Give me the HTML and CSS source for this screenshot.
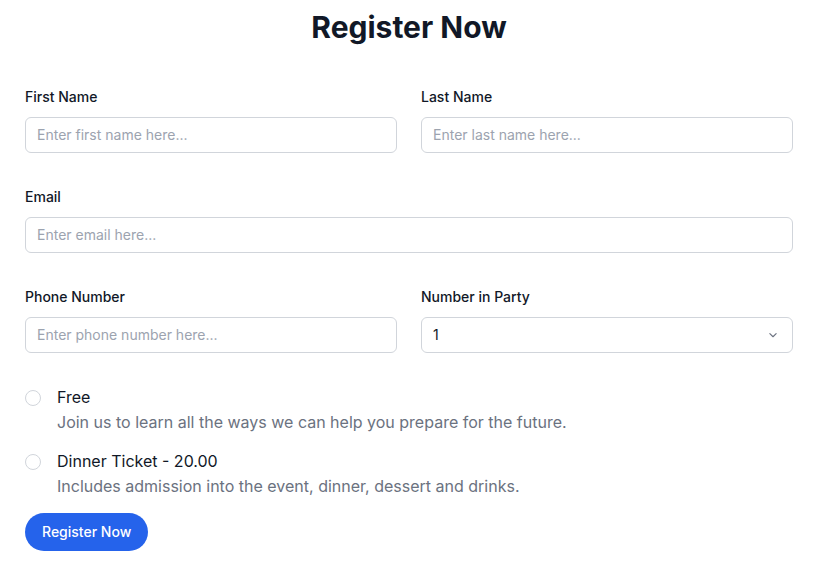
FILE: index.html
```html
<!DOCTYPE html>
<html>
<head>
<meta charset="utf-8">
<link rel="stylesheet" href="styles.css">
</head>
<body>
<main class="page">
  <h1 class="title">Register Now</h1>
  <form class="form">
    <div class="row two">
      <div class="field">
        <label class="label">First Name</label>
        <input class="input" type="text" placeholder="Enter first name here...">
      </div>
      <div class="field">
        <label class="label">Last Name</label>
        <input class="input" type="text" placeholder="Enter last name here...">
      </div>
    </div>
    <div class="row">
      <div class="field">
        <label class="label">Email</label>
        <input class="input" type="text" placeholder="Enter email here...">
      </div>
    </div>
    <div class="row two">
      <div class="field">
        <label class="label">Phone Number</label>
        <input class="input" type="text" placeholder="Enter phone number here...">
      </div>
      <div class="field">
        <label class="label">Number in Party</label>
        <div class="select">
          <span>1</span>
          <svg class="chev" width="14" height="14" viewBox="0 0 20 20" fill="none" stroke="#6b7280" stroke-width="1.6" stroke-linecap="round" stroke-linejoin="round"><path d="M5.5 8l4.5 4.5 4.5-4.5"/></svg>
        </div>
      </div>
    </div>
    <div class="options">
      <div class="option">
        <span class="radio"></span>
        <div class="opt-text">
          <div class="opt-title">Free</div>
          <div class="opt-desc">Join us to learn all the ways we can help you prepare for the future.</div>
        </div>
      </div>
      <div class="option">
        <span class="radio"></span>
        <div class="opt-text">
          <div class="opt-title">Dinner Ticket - 20.00</div>
          <div class="opt-desc">Includes admission into the event, dinner, dessert and drinks.</div>
        </div>
      </div>
    </div>
    <button class="btn" type="button">Register Now</button>
  </form>
</main>
</body>
</html>
```
FILE: styles.css
```css
* { box-sizing: border-box; }
html, body { margin: 0; padding: 0; background: #ffffff; }
body {
  font-family: Inter, "Noto Sans", sans-serif;
  color: #111827;
}
.page {
  padding: 9px 25px 0;
}
.title {
  margin: 0;
  text-align: center;
  font-size: 30px;
  line-height: 36px;
  font-weight: 700;
  color: #111827;
}
.form {
  margin-top: 42px;
  display: flex;
  flex-direction: column;
}
.row {
  display: grid;
  grid-template-columns: 1fr;
  column-gap: 24px;
  margin-bottom: 34px;
}
.row.two { grid-template-columns: 1fr 1fr; }
.field { display: flex; flex-direction: column; }
.label {
  font-size: 14px;
  line-height: 20px;
  font-weight: 500;
  color: #111827;
  margin-bottom: 10px;
}
.input, .select {
  height: 36px;
  border: 1px solid #d1d5db;
  border-radius: 6px;
  padding: 0 11px;
  font-family: inherit;
  font-size: 14px;
  line-height: 20px;
  color: #111827;
  background: #fff;
  outline: none;
  width: 100%;
}
.input { padding-bottom: 2px; }
.input::placeholder { color: #9ca3af; }
.select {
  display: flex;
  align-items: center;
  justify-content: space-between;
  padding-right: 12px;
}
.options {
  display: flex;
  flex-direction: column;
  gap: 16px;
  margin-top: -1px;
}
.option {
  display: flex;
  align-items: flex-start;
  gap: 16px;
}
.radio {
  flex: none;
  width: 16px;
  height: 16px;
  margin-top: 4px;
  border: 1px solid #d1d5db;
  border-radius: 50%;
  background: #fff;
}
.opt-title {
  font-size: 16px;
  line-height: 24px;
  font-weight: 400;
  color: #111827;
  margin-top: -1px;
  margin-bottom: 1px;
}
.opt-desc {
  font-size: 16px;
  line-height: 24px;
  color: #6b7280;
}
.btn {
  align-self: flex-start;
  margin-top: 15px;
  height: 38px;
  padding: 0 17px;
  border: none;
  border-radius: 9999px;
  background: #2563eb;
  color: #fff;
  font-family: inherit;
  font-size: 14px;
  font-weight: 500;
  line-height: 20px;
}
```
